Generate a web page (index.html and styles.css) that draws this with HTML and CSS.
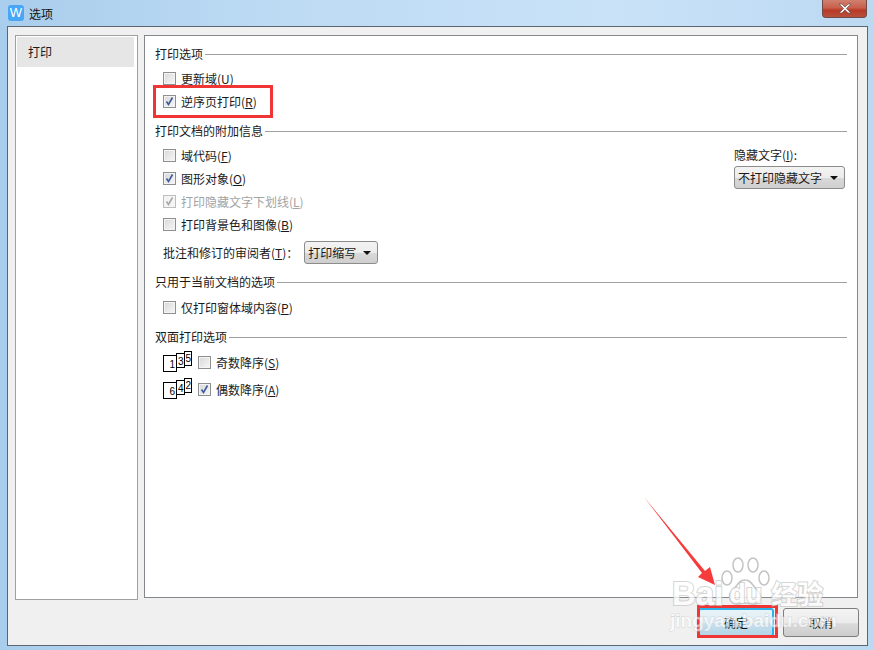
FILE: index.html
```html
<!DOCTYPE html>
<html>
	<head>
		<meta charset="UTF-8">
		<link rel="stylesheet" href="styles.css">
		<title>选项</title>
	</head>
	<body>
		<div class="window">
			<div class="titlebar">
				<span class="app-icon">W</span>
				<span class="title">选项</span>
				<div class="close-btn">
					<svg width="16" height="11" viewBox="0 0 16 11"><path d="M2 1h3l3 3 3-3h3l-4.500 4.500 4.500 4.500h-3l-3-3-3 3h-3l4.500-4.500z" fill="#f2f2f2" stroke="#6a4a46" stroke-width=".7"/></svg>
				</div>
			</div>
			<div class="client">
				<div class="panes">
					<div class="nav">
						<div class="nav-item">打印</div>
					</div>
					<div class="content">
						<div class="heading">打印选项</div>
						<div class="group first">
							<label class="row"><span class="check"></span>更新域(<u>U</u>)</label>
							<label class="row"><span class="check on"><svg width="11" height="11" viewBox="0 0 11 11"><path d="M2.500 5.500l2 3 4-7" fill="none" stroke="#3f5a9c" stroke-width="1.600"/></svg></span>逆序页打印(<u>R</u>)</label>
						</div>
						<div class="heading">打印文档的附加信息</div>
						<div class="group split">
							<div class="col">
								<label class="row"><span class="check"></span>域代码(<u>F</u>)</label>
								<label class="row"><span class="check on"><svg width="11" height="11" viewBox="0 0 11 11"><path d="M2.500 5.500l2 3 4-7" fill="none" stroke="#3f5a9c" stroke-width="1.600"/></svg></span>图形对象(<u>O</u>)</label>
								<label class="row disabled"><span class="check on"><svg width="11" height="11" viewBox="0 0 11 11"><path d="M2.500 5.500l2 3 4-7" fill="none" stroke="#a8a8a8" stroke-width="1.600"/></svg></span>打印隐藏文字下划线(<u>L</u>)</label>
								<label class="row"><span class="check"></span>打印背景色和图像(<u>B</u>)</label>
								<div class="row reviewer">批注和修订的审阅者(<u>T</u>)：<span class="combo small">打印缩写<i class="caret"></i></span></div>
							</div>
							<div class="hidden-text">
								<div class="hidden-label">隐藏文字(<u>I</u>):</div>
								<span class="combo wide">不打印隐藏文字<i class="caret"></i></span>
							</div>
						</div>
						<div class="heading">只用于当前文档的选项</div>
						<div class="group">
							<label class="row"><span class="check"></span>仅打印窗体域内容(<u>P</u>)</label>
						</div>
						<div class="heading">双面打印选项</div>
						<div class="group duplex">
							<div class="row">
								<svg class="pages" width="29" height="21" viewBox="0 0 29 21">
									<rect x="21.500" y=".5" width="7" height="14" fill="#fff" stroke="#000"/>
									<rect x="13.500" y="2.500" width="8" height="14" fill="#fff" stroke="#000"/>
									<rect x=".5" y="4.500" width="13" height="16" fill="#fff" stroke="#000"/>
									<text x="6.500" y="17" class="num">1</text><text x="15" y="14" class="num">3</text><text x="22.500" y="11" class="num">5</text>
								</svg>
								<span class="check"></span>奇数降序(<u>S</u>)
							</div>
							<div class="row">
								<svg class="pages" width="29" height="21" viewBox="0 0 29 21">
									<rect x="21.500" y=".5" width="7" height="14" fill="#fff" stroke="#000"/>
									<rect x="13.500" y="2.500" width="8" height="14" fill="#fff" stroke="#000"/>
									<rect x=".5" y="4.500" width="13" height="16" fill="#fff" stroke="#000"/>
									<text x="6.500" y="17" class="num">6</text><text x="15" y="14" class="num">4</text><text x="22.500" y="11" class="num">2</text>
								</svg>
								<span class="check on"><svg width="11" height="11" viewBox="0 0 11 11"><path d="M2.500 5.500l2 3 4-7" fill="none" stroke="#3f5a9c" stroke-width="1.600"/></svg></span>偶数降序(<u>A</u>)
							</div>
						</div>
					</div>
				</div>
				<div class="footer">
					<button class="btn primary">确定</button>
					<button class="btn">取消</button>
				</div>
			</div>
		</div>

		<!-- annotations drawn over the screenshot -->
		<div class="mark mark-option"></div>
		<div class="mark mark-ok"></div>
		<svg class="arrow" width="874" height="650" viewBox="0 0 874 650"><polygon points="644,497 705,571 710,567 715,585 698,577 702,573" fill="#f53b3b"/></svg>
		<div class="watermark">
			<svg class="paw" width="50" height="54" viewBox="0 0 50 54">
				<g fill="#fff" fill-opacity=".75" stroke="#c4c4c4" stroke-width="1.500">
					<ellipse cx="7" cy="21" rx="5" ry="7"/>
					<ellipse cx="18" cy="8" rx="5" ry="7"/>
					<ellipse cx="33" cy="8" rx="5" ry="7"/>
					<ellipse cx="44" cy="21" rx="5" ry="7"/>
					<path d="M25 23c-7 0-8 7-13 11-5 5-2 14 6 13 4 0 5-1 7-1s4 1 8 1c8 1 10-8 5-13-5-4-6-11-13-11z"/>
				</g>
			</svg>
			<div class="wm-name"><span>Bai</span><span class="wm-du">du</span><span class="wm-cn">经验</span></div>
			<div class="wm-url">jingyan.baidu.com</div>
		</div>
	</body>
</html>
```

FILE: styles.css
```css
* {
	box-sizing: border-box;
}

body {
	margin: 0;
	width: 874px;
	height: 650px;
	overflow: hidden;
	position: relative;
	font-family: "Noto Sans CJK SC", "Liberation Sans", sans-serif;
	font-size: 12px;
	color: #1a1a1a;
	background: linear-gradient(to right, #a9cdec 0, #bcdaf3 30%, #c9e2f8 70%, #bcd9f2 100%);
}

.window {
	height: 650px;
	display: flex;
	flex-direction: column;
	padding: 0 6px 4px 7px;
}

.titlebar {
	height: 26px;
	flex: none;
	display: flex;
	align-items: center;
	position: relative;
}

.app-icon {
	width: 16px;
	height: 16px;
	margin: 0 5px 0 1px;
	border-radius: 3px;
	background: #48a6f6;
	color: #fff;
	font: 13px/16px "Liberation Sans", sans-serif;
	text-align: center;
}

.title {
	font-size: 12px;
	color: #111;
}

.close-btn {
	position: absolute;
	right: 1px;
	top: 0;
	width: 45px;
	height: 18px;
	border: 1px solid #6e4a48;
	border-top: 0;
	border-radius: 0 0 4px 4px;
	background: linear-gradient(#d08070 0, #c8604c 45%, #b83a26 60%, #b8503c 100%);
	display: flex;
	align-items: center;
	justify-content: center;
}

.client {
	flex: 1;
	display: flex;
	flex-direction: column;
	border: 1px solid #5b6670;
	background: #f0f0f0;
	padding: 8px 8px 0 7px;
}

.panes {
	display: flex;
	gap: 6px;
	align-items: flex-start;
}

.nav {
	width: 123px;
	height: 565px;
	padding: 1px;
	background: #fff;
	border: 1px solid #a0a0a0;
}

.nav-item {
	height: 30px;
	width: 117px;
	padding-left: 11px;
	line-height: 29px;
	background: #e6e6e6;
}

.content {
	width: 714px;
	height: 563px;
	padding: 10px 10px 0 10px;
	background: #fff;
	border: 1px solid #84888c;
}

.heading {
	display: flex;
	align-items: center;
	gap: 2px;
	height: 16px;
	line-height: 16px;
	white-space: nowrap;
}

.heading::after {
	content: "";
	flex: 1;
	height: 1px;
	background: #a0a0a0;
}

.group {
	margin: 6px 0 10px 8px;
}

.first,
.split {
	margin-top: 5px;
}

.split {
	display: flex;
	justify-content: space-between;
}

.row {
	display: flex;
	align-items: center;
	height: 23px;
	white-space: nowrap;
}

.disabled {
	color: #a3a3a3;
}

.check {
	width: 13px;
	height: 13px;
	margin-right: 5px;
	border: 1px solid #8e8f8f;
	background: linear-gradient(135deg, #d8d8d8, #f7f7f7);
	box-shadow: inset 0 0 0 1px #f4f4f4;
	display: flex;
	align-items: center;
	justify-content: center;
	flex: none;
}

.disabled .check {
	border-color: #bdbdbd;
	background: #f4f4f4;
}

.reviewer {
	margin-top: 5px;
}

.combo {
	display: inline-flex;
	align-items: center;
	justify-content: space-between;
	height: 23px;
	padding: 0 6px 0 3px;
	border: 1px solid #8c8c8c;
	border-radius: 3px;
	background: linear-gradient(#f3f3f3 0, #ececec 50%, #d8d8d8 55%, #cfcfcf 100%);
}

.small {
	width: 74px;
	margin-left: 6px;
}

.wide {
	width: 111px;
}

.caret {
	width: 0;
	height: 0;
	border-left: 4px solid transparent;
	border-right: 4px solid transparent;
	border-top: 4px solid #111;
}

.hidden-text {
	margin: 0 2px 0 0;
}

.hidden-label {
	height: 16px;
	line-height: 16px;
	margin: 3px 0 3px;
}

.duplex .row + .row {
	margin-top: 4px;
}

.pages {
	margin: 0 6px 3px 0;
	flex: none;
}

.num {
	font: 10px "Liberation Sans", sans-serif;
}

.footer {
	flex: 1;
	display: flex;
	justify-content: flex-end;
	gap: 9px;
	padding-top: 8px;
}

.btn {
	width: 76px;
	height: 29px;
	padding: 0;
	border: 1px solid #7e7e7e;
	border-radius: 3px;
	background: linear-gradient(#f4f4f4 0, #ebebeb 50%, #dadada 55%, #cdcdcd 100%);
	color: #111;
	font: inherit;
}

.primary {
	border: 2px solid #2fb2ea;
	background: linear-gradient(#e8f3f8 0, #dcecf4 50%, #c4e0ee 55%, #b4d6e8 100%);
}

.mark {
	position: absolute;
	border: 3px solid #f03535;
}

.mark-option {
	left: 153px;
	top: 85px;
	width: 120px;
	height: 33px;
}

.mark-ok {
	left: 697px;
	top: 605px;
	width: 81px;
	height: 33px;
}

.arrow {
	position: absolute;
	left: 0;
	top: 0;
}

.watermark {
	position: absolute;
	left: 670px;
	top: 557px;
	width: 170px;
	height: 80px;
	color: #fff;
}

.paw {
	position: absolute;
	left: 50px;
	top: 0;
}

.wm-name {
	position: absolute;
	left: 2px;
	top: 19px;
	display: flex;
	font: bold 33px/36px "Liberation Sans", sans-serif;
	-webkit-text-stroke: 2px #c8c8c8;
	paint-order: stroke fill;
	opacity: .75;
}

.wm-du {
	margin-left: 6px;
	font-size: 27px;
}

.wm-cn {
	margin-left: 9px;
	font: bold 26px/34px "Noto Sans CJK SC", sans-serif;
}

.wm-url {
	position: absolute;
	left: 0;
	top: 52px;
	font: bold 19px/24px "Liberation Sans", sans-serif;
	-webkit-text-stroke: 1px #c8c8c8;
	paint-order: stroke fill;
	opacity: .6;
}
```
